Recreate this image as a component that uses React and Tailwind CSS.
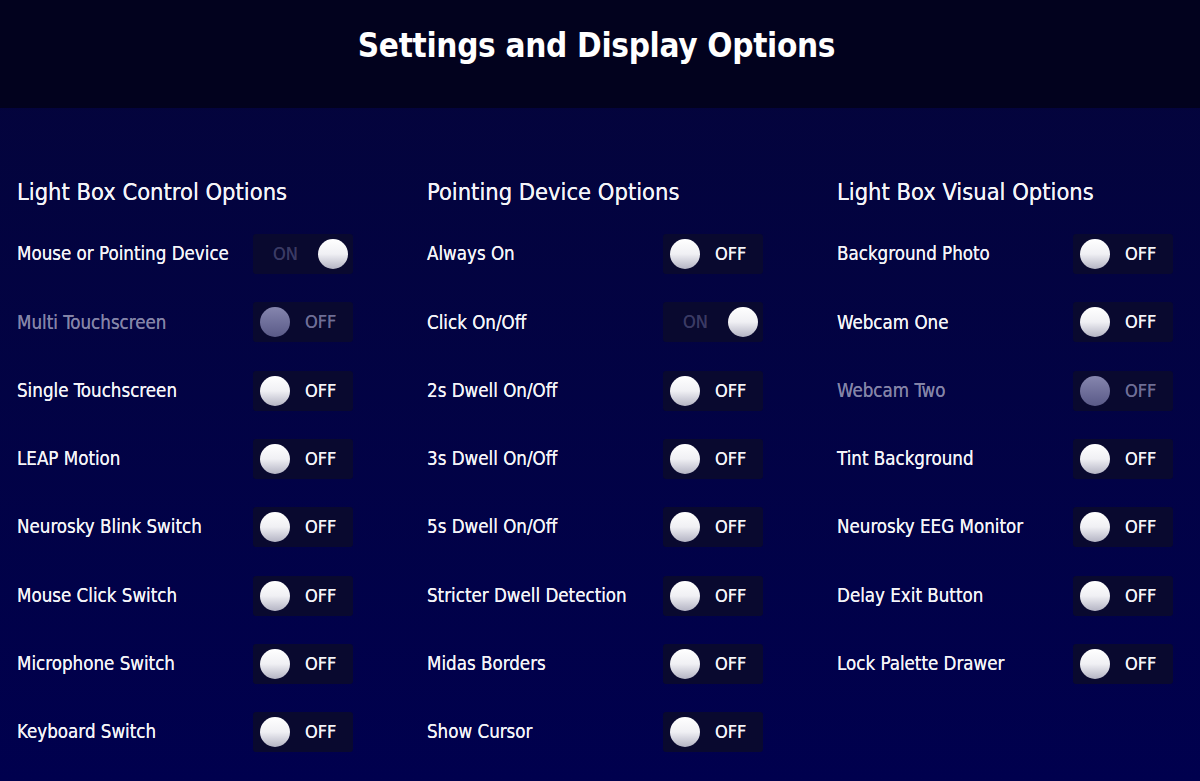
const columns = [
  {
    title: 'Light Box Control Options',
    items: [
      { label: 'Mouse or Pointing Device', on: true },
      { label: 'Multi Touchscreen', disabled: true },
      { label: 'Single Touchscreen' },
      { label: 'LEAP Motion' },
      { label: 'Neurosky Blink Switch' },
      { label: 'Mouse Click Switch' },
      { label: 'Microphone Switch' },
      { label: 'Keyboard Switch' },
    ],
  },
  {
    title: 'Pointing Device Options',
    items: [
      { label: 'Always On' },
      { label: 'Click On/Off', on: true },
      { label: '2s Dwell On/Off' },
      { label: '3s Dwell On/Off' },
      { label: '5s Dwell On/Off' },
      { label: 'Stricter Dwell Detection' },
      { label: 'Midas Borders' },
      { label: 'Show Cursor' },
    ],
  },
  {
    title: 'Light Box Visual Options',
    items: [
      { label: 'Background Photo' },
      { label: 'Webcam One' },
      { label: 'Webcam Two', disabled: true },
      { label: 'Tint Background' },
      { label: 'Neurosky EEG Monitor' },
      { label: 'Delay Exit Button' },
      { label: 'Lock Palette Drawer' },
    ],
  },
];

const font = { fontFamily: '"DejaVu Sans Condensed", "DejaVu Sans", Tahoma, sans-serif' };

// white knob with a soft grey underside; greyed out when the option is unavailable
function Knob({ disabled }) {
  return (
    <span
      className={`w-[30px] h-[30px] rounded-full shrink-0 ${
        disabled
          ? 'bg-linear-to-b from-[#8686ae] to-[#5a5a88]'
          : 'bg-linear-to-b from-white via-[#f0f0f4] to-[#b4b4c4]'
      }`}
    />
  );
}

function Toggle({ on, disabled }) {
  if (on) {
    return (
      <div className="w-[100px] h-[40px] rounded-[3px] bg-[#09092f] shrink-0 flex items-center pl-[20px] gap-[20px]">
        <span className="text-[18px] leading-[20px] text-[#3a3a64] [text-shadow:0_0_0.5px_currentColor]">ON</span>
        <Knob />
      </div>
    );
  }
  return (
    <div className="w-[100px] h-[40px] rounded-[3px] bg-[#09092f] shrink-0 flex items-center pl-[7px] gap-[15px]">
      <Knob disabled={disabled} />
      <span
        className={`text-[18px] leading-[20px] [text-shadow:0_0_0.5px_currentColor] ${
          disabled ? 'text-[#6e6e96]' : 'text-[#f4f4f8]'
        }`}
      >
        OFF
      </span>
    </div>
  );
}

export default function App() {
  return (
    <div className="w-[1200px] h-[781px] overflow-hidden bg-linear-to-b from-[#04043a] to-[#00004e]" style={font}>
      <div className="h-[108px] bg-[#02021e] flex justify-center pt-[26px] pr-[7px]">
        <h1 className="text-[33px] leading-[40px] text-white font-bold tracking-[-0.3px]">Settings and Display Options</h1>
      </div>
      <div className="flex pl-[17px] pt-[69px]">
        {columns.map((col) => (
          <div key={col.title} className="w-[410px] shrink-0">
            <h2 className="text-[23.5px] leading-[30px] text-[#f4f4f8] mb-[13px] [text-shadow:0_0_0.6px_#fff]">
              {col.title}
            </h2>
            {col.items.map((item) => (
              <div key={item.label} className="h-[68.3px] flex items-center">
                <span
                  className={`w-[236px] shrink-0 text-[18.6px] [text-shadow:0_0_0.5px_currentColor] ${
                    item.disabled ? 'text-[#8484a8]' : 'text-[#f4f4f8]'
                  }`}
                >
                  {item.label}
                </span>
                <Toggle on={item.on} disabled={item.disabled} />
              </div>
            ))}
          </div>
        ))}
      </div>
    </div>
  );
}
